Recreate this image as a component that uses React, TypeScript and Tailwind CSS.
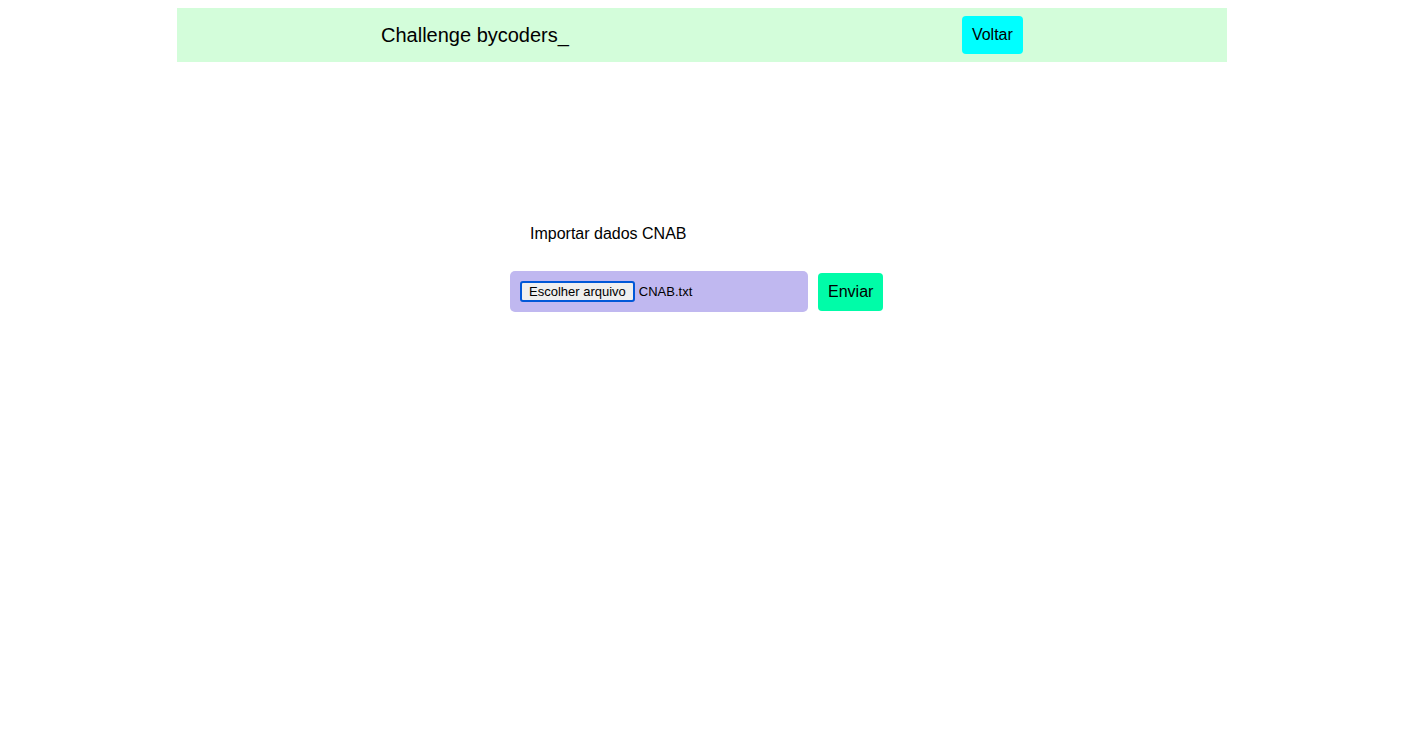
import React from "react";

export default function App() {
  return (
    <div className="min-h-[753px] bg-white pt-2 font-['Liberation_Sans',Arial,sans-serif] text-black">
      {/* header */}
      <header className="ml-[177px] flex h-[54px] w-[1050px] items-center bg-[#d3fdda]">
        <h1 className="ml-[204px] text-[20px] leading-none">Challenge bycoders_</h1>
        <button
          type="button"
          className="ml-[393px] h-[38px] rounded-[4px] bg-[#00ffff] px-[10px] text-[16px]"
        >
          Voltar
        </button>
      </header>

      {/* form */}
      <main className="ml-[510px] mt-[162px] flex flex-col">
        <p className="ml-[20px] text-[16px] leading-[20px]">Importar dados CNAB</p>
        <div className="mt-[27px] flex items-center gap-[10px]">
          <div className="flex h-[41px] w-[298px] items-center rounded-[5px] bg-[#c0b8f0] px-[10px]">
            <span className="flex h-[21px] items-center rounded-[3px] border-2 border-[#0057d8] bg-[#efefef] px-[7px] text-[13px] leading-none">
              Escolher arquivo
            </span>
            <span className="ml-[4px] text-[13px]">CNAB.txt</span>
          </div>
          <button
            type="button"
            className="h-[38px] rounded-[4px] bg-[#00fca8] px-[10px] text-[16px]"
          >
            Enviar
          </button>
        </div>
      </main>
    </div>
  );
}
